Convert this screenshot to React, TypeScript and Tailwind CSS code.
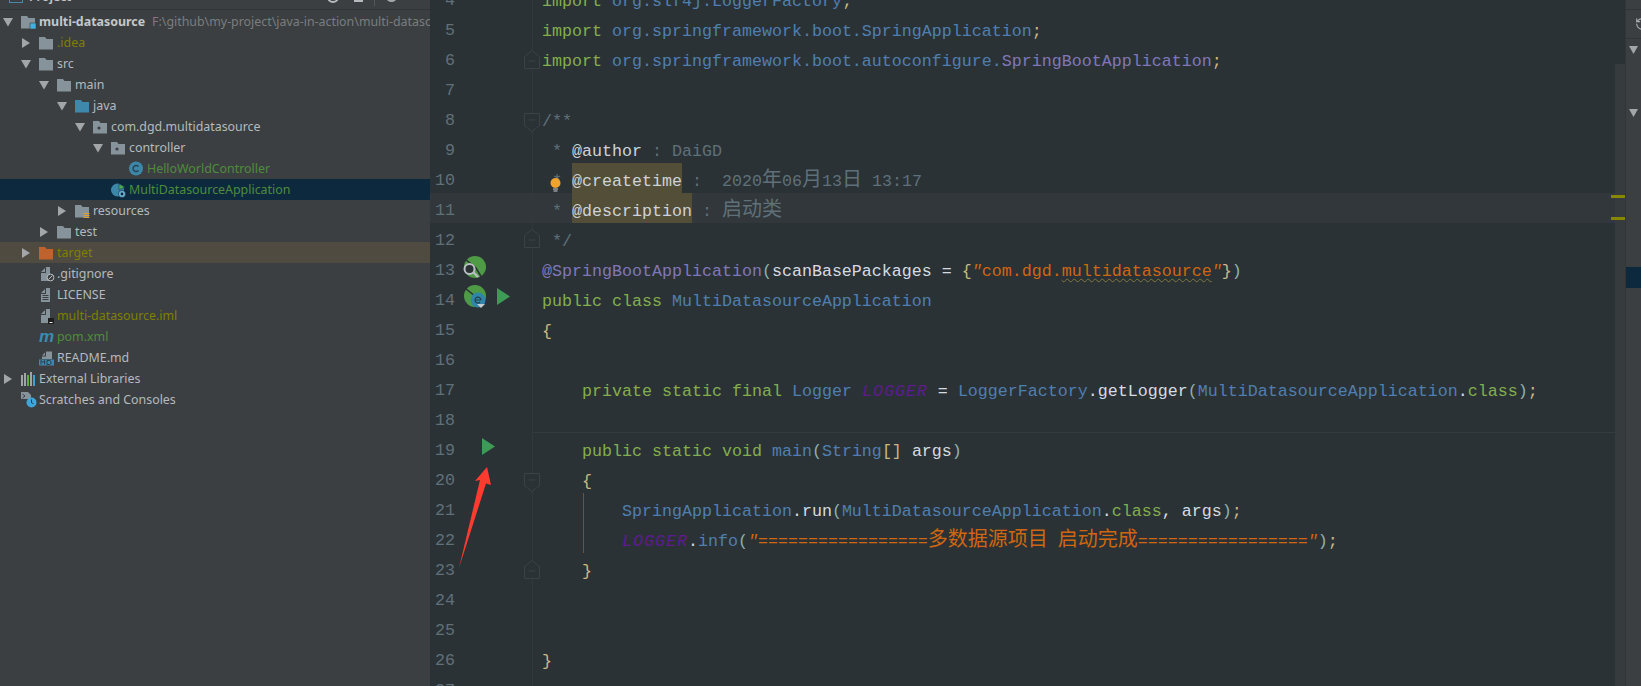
import type { ReactNode } from "react";
import { RotateCcw } from "lucide-react";

// ---- code token helpers
const K = ({ children }: { children: ReactNode }) => <span className="text-[#83ae4c]">{children}</span>;
const B = ({ children }: { children: ReactNode }) => <span className="text-[#4f7fb0]">{children}</span>;
const W = ({ children }: { children: ReactNode }) => <span className="text-[#d5dce0]">{children}</span>;
const Y = ({ children }: { children: ReactNode }) => <span className="text-[#c9b884]">{children}</span>;
const P = ({ children }: { children: ReactNode }) => <span className="text-[#8fb0ac]">{children}</span>;
const S = ({ children }: { children: ReactNode }) => <span className="text-[#d0660f]">{children}</span>;
const C = ({ children }: { children: ReactNode }) => <span className="text-[#5f7079]">{children}</span>;
const A = ({ children }: { children: ReactNode }) => <span className="text-[#8077b8]">{children}</span>;
const Q = () => <span className="text-[#d0660f] italic">"</span>;
const Logger = () => <span className="text-[#5e1a90] italic tracking-[1px]">LOGGER</span>;
const Cjk = ({ children }: { children: ReactNode }) => (
  <span className="text-[20px] leading-none font-['Noto_Sans_CJK_SC',sans-serif]">{children}</span>
);

const CODE: Record<number, ReactNode> = {
  4: <><K>import</K> <B>org.slf4j.LoggerFactory</B><Y>;</Y></>,
  5: <><K>import</K> <B>org.springframework.boot.SpringApplication</B><Y>;</Y></>,
  6: <><K>import</K> <B>org.springframework.boot.autoconfigure.</B><A>SpringBootApplication</A><Y>;</Y></>,
  8: <C>/**</C>,
  9: <><C> * </C><span className="text-[#cdd3d7]">@author</span><C> : DaiGD</C></>,
  10: (
    <>
      <C> * </C>
      <span className="bg-[#534e38] inline-block h-[30px] leading-[38px] align-top text-[#cdd3d7]">@createtime</span>
      <C> :  2020<Cjk>年</Cjk>06<Cjk>月</Cjk>13<Cjk>日</Cjk> 13:17</C>
    </>
  ),
  11: (
    <>
      <C> * </C>
      <span className="bg-[#534e38] inline-block h-[30px] leading-[38px] align-top text-[#cdd3d7]">@description</span>
      <C> : <Cjk>启动类</Cjk></C>
    </>
  ),
  12: <C> */</C>,
  13: (
    <>
      <A>@SpringBootApplication</A><P>(</P><W>scanBasePackages = </W><Y>{"{"}</Y><Q />
      <S>com.dgd.</S>
      <span className="text-[#d0660f] underline decoration-wavy decoration-[#7d7a3a] decoration-1 underline-offset-2">multidatasource</span>
      <Q /><Y>{"}"}</Y><P>)</P>
    </>
  ),
  14: <><K>public class</K> <B>MultiDatasourceApplication</B></>,
  15: <Y>{"{"}</Y>,
  17: (
    <>
      {"    "}<K>private static final</K> <B>Logger</B> <Logger /><W> = </W><B>LoggerFactory</B><W>.getLogger</W><P>(</P>
      <B>MultiDatasourceApplication</B><W>.</W><K>class</K><P>)</P><Y>;</Y>
    </>
  ),
  19: <>{"    "}<K>public static void</K> <B>main</B><P>(</P><B>String</B><Y>[]</Y> <W>args</W><P>)</P></>,
  20: <>{"    "}<Y>{"{"}</Y></>,
  21: (
    <>
      {"        "}<B>SpringApplication</B><W>.run</W><P>(</P><B>MultiDatasourceApplication</B><W>.</W><K>class</K>
      <W>, args</W><P>)</P><Y>;</Y>
    </>
  ),
  22: (
    <>
      {"        "}<Logger /><W>.</W><B>info</B><P>(</P><Q />
      <S>=================<Cjk>多数据源项目</Cjk> <Cjk>启动完成</Cjk>=================</S><Q /><P>)</P><Y>;</Y>
    </>
  ),
  23: <>{"    "}<Y>{"}"}</Y></>,
  26: <Y>{"}"}</Y>,
};

// ---- gutter drawings
function Fold({ end, className }: { end?: boolean; className: string }) {
  return (
    <svg width="16" height="19" viewBox="0 0 16 19" className={`absolute left-[94px] ${className}`}>
      <path
        d={end ? "M.5 6.500 8 .5l7.500 6v12H.5z" : "M.5.5h15v12l-7.500 6-7.500-6z"}
        fill="#2b3236"
        stroke="#3a4246"
      />
      <path d={end ? "M4.500 11h7" : "M4.500 7h7"} stroke="#3a4246" />
    </svg>
  );
}

function SpringLeaf({ children }: { children?: ReactNode }) {
  return (
    <svg width="23" height="23" viewBox="0 0 23 23" className="absolute left-[33px] top-0">
      <circle cx="12" cy="11" r="11" fill="#4f9a45" />
      <path d="M2 3 13 12 19 22" fill="none" stroke="#2b3236" strokeWidth="1.6" />
      {children}
    </svg>
  );
}

function Play({ className }: { className: string }) {
  return (
    <svg width="13" height="17" viewBox="0 0 13 17" className={`absolute ${className}`}>
      <path d="M0 0 13 8.500 0 17z" fill="#3f9a55" />
    </svg>
  );
}

function gutterExtras(n: number) {
  switch (n) {
    case 6:
      return <Fold end className="top-[7px]" />;
    case 8:
      return <Fold className="top-[10px]" />;
    case 12:
      return <Fold end className="top-[6px]" />;
    case 13:
      return (
        <div className="absolute inset-0 top-[3px]">
          <SpringLeaf>
            <circle cx="6.500" cy="13" r="5" fill="#2b3236" stroke="#b9bfc3" strokeWidth="2" />
            <path d="M10.500 16.500 15 21" stroke="#b9bfc3" strokeWidth="2.400" />
          </SpringLeaf>
        </div>
      );
    case 14:
      return (
        <>
          <div className="absolute inset-0 top-[2px]">
            <SpringLeaf>
              <circle cx="15" cy="15" r="7.500" fill="#2f86a8" />
              <path d="M12 15h6M18 15a3 3 0 1 0-1 2.300" fill="none" stroke="#24404c" strokeWidth="1.200" />
              <path d="M14 19h8l-4 4z" fill="#c8cbcd" />
            </SpringLeaf>
          </div>
          <Play className="left-[67px] top-[5px]" />
        </>
      );
    case 19:
      return <Play className="left-[52px] top-[5px]" />;
    case 20:
      return <Fold className="top-[10px]" />;
    case 23:
      return <Fold end className="top-[7px]" />;
    default:
      return null;
  }
}

function CodeRow({ n }: { n: number }) {
  const caret = n === 11;
  return (
    <div className={`relative flex h-[30px] ${caret ? "bg-[#31373a]" : ""}`}>
      <div className="relative h-full w-[103px] shrink-0 border-r border-[#32393d]">
        <div className="w-[25px] text-right text-[#5f7079]">{n}</div>
        {gutterExtras(n)}
      </div>
      <div className={`min-w-0 flex-1 pl-[9px] leading-[38px] whitespace-pre ${n === 18 ? "border-b border-[#353c40]" : ""}`}>
        {CODE[n]}
      </div>
      {n === 10 && (
        <svg width="11" height="15" viewBox="0 0 11 15" className="absolute left-[120px] top-[15px]">
          <circle cx="5.500" cy="5" r="5" fill="#f0a32d" />
          <path d="M3 11h5M3.500 13h4" stroke="#c9ced1" />
        </svg>
      )}
      {(n === 21 || n === 22) && <div className="absolute left-[153px] top-0 h-full w-px bg-[#8a4c14]" />}
    </div>
  );
}

// ---- tree icons
const Caret = ({ open }: { open?: boolean }) => (
  <svg width="10" height="10" viewBox="0 0 10 10">
    <path d={open ? "M0 1h10L5 9.500z" : "M1 0l8 5-8 5z"} fill="#a3a6a8" />
  </svg>
);

function Folder({ color = "#87939a", children }: { color?: string; children?: ReactNode }) {
  return (
    <svg width="15" height="14" viewBox="0 0 15 14">
      <path d="M0 1h6l1.500 2H14v10.500H0z" fill={color} />
      {children}
    </svg>
  );
}

function PageIcon({ children }: { children?: ReactNode }) {
  return (
    <svg width="16" height="16" viewBox="0 0 16 16">
      <path d="M2 6 6 2v4zM7 1h4v14H2V7h5z" fill="#87939a" />
      {children}
    </svg>
  );
}

const ICONS: Record<string, ReactNode> = {
  module: (
    <Folder>
      <rect x="9" y="8" width="6" height="6" fill="#3fb1e3" stroke="#3c3f41" strokeWidth=".6" />
    </Folder>
  ),
  folder: <Folder />,
  java: <Folder color="#3d88ab" />,
  pkg: (
    <Folder>
      <circle cx="6" cy="8" r="1.600" fill="#3c3f41" />
    </Folder>
  ),
  resources: (
    <Folder>
      <path d="M8.500 9.500h6M8.500 11.500h6M8.500 13.500h6" stroke="#e0a030" strokeWidth="1.100" />
    </Folder>
  ),
  target: <Folder color="#c0622d" />,
  cls: (
    <svg width="15" height="15" viewBox="0 0 15 15">
      <circle cx="7" cy="7.500" r="7" fill="#3c87a8" />
      <path d="M9.500 5.700a3 3 0 1 0 0 3.600" fill="none" stroke="#27414d" strokeWidth="1.400" />
    </svg>
  ),
  app: (
    <svg width="16" height="16" viewBox="0 0 16 16">
      <circle cx="6.500" cy="8" r="6.500" fill="#3c87a8" />
      <path d="M8 2V8L14 5z" fill="#4faa55" stroke="#0d293e" strokeWidth=".5" />
      <circle cx="11" cy="12" r="3.600" fill="#6fb2d4" stroke="#0d293e" strokeWidth=".6" />
      <circle cx="11" cy="12" r="1.400" fill="#0d293e" />
    </svg>
  ),
  gitignore: (
    <PageIcon>
      <circle cx="11.500" cy="11.500" r="3.400" fill="#3c3f41" stroke="#b9bec1" strokeWidth="1" />
      <path d="M9.500 13.500l4-4" stroke="#b9bec1" />
    </PageIcon>
  ),
  license: (
    <PageIcon>
      <path d="M3.500 8.500h6M3.500 10.500h6M3.500 12.500h6" stroke="#3c3f41" />
    </PageIcon>
  ),
  iml: (
    <PageIcon>
      <rect x="9" y="10" width="6" height="6" fill="#1d1d1d" />
      <path d="M10.500 14.500h3" stroke="#f0f0f0" />
    </PageIcon>
  ),
  pom: <span className="block w-[15px] font-['Liberation_Sans',sans-serif] text-[17px] leading-[14px] font-bold text-[#3a8cb2] italic">m</span>,
  readme: (
    <svg width="16" height="16" viewBox="0 0 16 16">
      <path d="M3 5.500 6 2.500v3zM7 1.500h6V9H3V6.500h4z" fill="#87939a" />
      <rect x="0" y="9.500" width="15" height="6" fill="#3a89ae" />
      <path d="M2 14.500v-4l1.800 2 1.800-2v4M8 10.500v4h2.500l1.500-1v-2l-1.500-1z" fill="none" stroke="#27353c" strokeWidth=".9" />
    </svg>
  ),
  libs: (
    <svg width="15" height="14" viewBox="0 0 15 14">
      <rect x="0" y="3" width="2" height="11" fill="#a0a5a8" />
      <rect x="3" y="1" width="2" height="13" fill="#a0a5a8" />
      <rect x="6" y="3" width="2" height="11" fill="#5fb13e" />
      <rect x="9" y="0" width="2" height="14" fill="#a0a5a8" />
      <rect x="12" y="3" width="2" height="11" fill="#3fa0d8" />
    </svg>
  ),
  scratch: (
    <svg width="16" height="16" viewBox="0 0 16 16">
      <path d="M0 0h7l3 3v4H0z" fill="#87939a" />
      <path d="M1.500 2 4 4 1.500 6" fill="none" stroke="#3c3f41" />
      <circle cx="10.500" cy="10.500" r="5" fill="#3fa6dc" />
      <path d="M10.500 7.500v3.200l2 1" fill="none" stroke="#1d3b4a" strokeWidth="1" />
    </svg>
  ),
};

type TreeRow = {
  level: number;
  arrow?: "open" | "closed";
  icon: string;
  label: string;
  color?: string;
  bg?: string;
  bold?: boolean;
  hint?: string;
};

const OLIVE = "text-[#7f7f00]";
const GREEN = "text-[#4e8c3c]";

const TREE: TreeRow[] = [
  { level: 0, arrow: "open", icon: "module", label: "multi-datasource", bold: true, hint: "F:\\github\\my-project\\java-in-action\\multi-datasource" },
  { level: 1, arrow: "closed", icon: "folder", label: ".idea", color: OLIVE },
  { level: 1, arrow: "open", icon: "folder", label: "src" },
  { level: 2, arrow: "open", icon: "folder", label: "main" },
  { level: 3, arrow: "open", icon: "java", label: "java" },
  { level: 4, arrow: "open", icon: "pkg", label: "com.dgd.multidatasource" },
  { level: 5, arrow: "open", icon: "pkg", label: "controller" },
  { level: 6, icon: "cls", label: "HelloWorldController", color: GREEN },
  { level: 5, icon: "app", label: "MultiDatasourceApplication", color: GREEN, bg: "bg-[#0d293e]" },
  { level: 3, arrow: "closed", icon: "resources", label: "resources" },
  { level: 2, arrow: "closed", icon: "folder", label: "test" },
  { level: 1, arrow: "closed", icon: "target", label: "target", color: OLIVE, bg: "bg-[#4f4b41]" },
  { level: 1, icon: "gitignore", label: ".gitignore" },
  { level: 1, icon: "license", label: "LICENSE" },
  { level: 1, icon: "iml", label: "multi-datasource.iml", color: OLIVE },
  { level: 1, icon: "pom", label: "pom.xml", color: GREEN },
  { level: 1, icon: "readme", label: "README.md" },
  { level: 0, arrow: "closed", icon: "libs", label: "External Libraries" },
  { level: 0, icon: "scratch", label: "Scratches and Consoles" },
];

const INDENT = ["pl-0", "pl-[18px]", "pl-[36px]", "pl-[54px]", "pl-[72px]", "pl-[90px]", "pl-[108px]"];

function Sidebar() {
  return (
    <aside className="h-full w-[430px] shrink-0 overflow-hidden bg-[#3c3f41] font-['Noto_Sans',sans-serif] text-[12.4px] text-[#b4babd]">
      <div className="flex h-[10px] items-start overflow-hidden border-b border-[#323537] pl-[9px]">
        <div className="-mt-[10px] h-[13px] w-[14px] border border-[#4a88a8]" />
        <span className="-mt-[11px] ml-[6px] leading-[16px] font-semibold text-[#c0c5c8]">Project</span>
        <div className="-mt-[9px] ml-[256px] h-[12px] w-[12px] rounded-full border-2 border-[#b4babd]" />
        <div className="-mt-[9px] ml-[15px] h-[11px] w-[9px] bg-[#b4babd]" />
        <div className="ml-[11px] h-[6px] w-px bg-[#55585a]" />
        <div className="-mt-[9px] ml-[11px] h-[11px] w-[11px] rounded-full bg-[#a4a8aa]" />
      </div>
      <div className="pt-px">
        {TREE.map((r) => (
          <div
            key={r.label}
            className={`flex h-[21px] items-center whitespace-nowrap ${INDENT[r.level]} ${r.bg ?? ""}`}
          >
            <span className="flex w-[21px] shrink-0 justify-start pl-[3px]">
              {r.arrow && <Caret open={r.arrow === "open"} />}
            </span>
            <span className="flex w-[18px] shrink-0 items-center">{ICONS[r.icon]}</span>
            <span className={`mt-[2px] ${r.bold ? "font-bold text-[#c3c8cb]" : ""} ${r.color ?? ""}`}>{r.label}</span>
            {r.hint && <span className="mt-[2px] ml-[7px] text-[#7a7d7f]">{r.hint}</span>}
          </div>
        ))}
      </div>
    </aside>
  );
}

function ToolStrip() {
  return (
    <div className="flex h-full w-[16px] shrink-0 flex-col overflow-hidden border-l border-[#323537] bg-[#3c3f41]">
      <div className="h-[10px] shrink-0 border-b border-[#323537]" />
      <div className="flex h-[29px] shrink-0 items-center border-b border-[#323537] pl-[9px]">
        <RotateCcw size={14} className="shrink-0 text-[#a8acae]" />
      </div>
      <svg width="9" height="8" viewBox="0 0 9 8" className="mt-[7px] ml-[3px] shrink-0">
        <path d="M0 0h9L4.500 8z" fill="#a3a6a8" />
      </svg>
      <svg width="9" height="8" viewBox="0 0 9 8" className="mt-[55px] ml-[3px] shrink-0">
        <path d="M0 0h9L4.500 8z" fill="#a3a6a8" />
      </svg>
      <div className="mt-[150px] h-[21px] w-full shrink-0 bg-[#0d293e]" />
    </div>
  );
}

export default function App() {
  const lines = Array.from({ length: 24 }, (_, i) => i + 4);
  return (
    <div className="flex h-[686px] w-[1641px] overflow-hidden">
      <Sidebar />
      <main className="relative h-full min-w-0 flex-1 overflow-hidden bg-[#2b3236] font-['Liberation_Mono',monospace] text-[16.67px] leading-[36px]">
        <div className="-mt-[17px]">
          {lines.map((n) => (
            <CodeRow key={n} n={n} />
          ))}
        </div>
        {/* scrollbar track with the two warning stripes */}
        <div className="absolute top-[64px] right-0 bottom-0 w-[10px] bg-[#363b3e]" />
        <div className="absolute top-[195px] right-0 h-[3px] w-[14px] bg-[#878700]" />
        <div className="absolute top-[217px] right-0 h-[3px] w-[14px] bg-[#878700]" />
        {/* hand-drawn arrow pointing at the run icon */}
        <svg width="40" height="110" viewBox="0 0 40 110" className="absolute top-[462px] left-[25px]">
          <path d="M32 5 36 23 31 21.500 4 106 25 18 20 19z" fill="#ff3b30" />
        </svg>
      </main>
      <ToolStrip />
    </div>
  );
}
